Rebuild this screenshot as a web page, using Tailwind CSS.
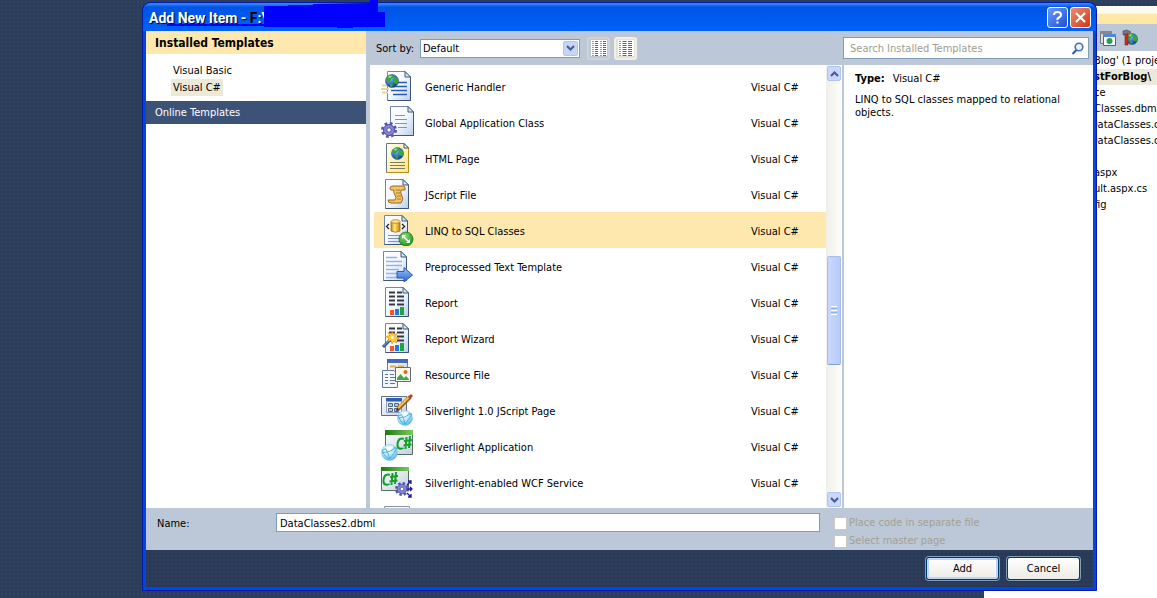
<!DOCTYPE html>
<html lang="en">
<head>
<meta charset="utf-8">
<meta name="viewport" content="width=device-width, initial-scale=1">
<title>Add New Item</title>
<script src="https://cdn.jsdelivr.net/npm/@tailwindcss/browser@4"></script>
</head>
<body class="relative h-screen overflow-hidden bg-[#2c3d5a] bg-[radial-gradient(#314463_1px,transparent_1px)] bg-[size:4px_4px] font-['DejaVu_Sans_Condensed','Noto_Sans',sans-serif] text-[11px] leading-4 text-black">

<svg class="absolute size-0" aria-hidden="true">
  <defs>
    <linearGradient id="paper" x1="0" y1="0" x2="1" y2="1"><stop offset="0" stop-color="#fff"/><stop offset=".5" stop-color="#f4f8fe"/><stop offset="1" stop-color="#b9cdf0"/></linearGradient>
    <linearGradient id="cream" x1="0" y1="0" x2="1" y2="1"><stop offset="0" stop-color="#fffef2"/><stop offset="1" stop-color="#ffe680"/></linearGradient>
    <linearGradient id="win" x1="0" y1="0" x2="1" y2="1"><stop offset="0" stop-color="#fff"/><stop offset="1" stop-color="#c3cfe0"/></linearGradient>
    <linearGradient id="gold" x1="0" y1="0" x2="1" y2="0"><stop offset="0" stop-color="#c98a00"/><stop offset=".4" stop-color="#ffe680"/><stop offset="1" stop-color="#c98200"/></linearGradient>
    <linearGradient id="greenbar" x1="0" y1="0" x2="1" y2="0"><stop offset="0" stop-color="#1f7a12"/><stop offset="1" stop-color="#7cc95e"/></linearGradient>
    <linearGradient id="bluearrow" x1="0" y1="0" x2="0" y2="1"><stop offset="0" stop-color="#9cc3f7"/><stop offset="1" stop-color="#2c67cf"/></linearGradient>
    <radialGradient id="sea" cx=".35" cy=".3" r=".8"><stop offset="0" stop-color="#8fc4ff"/><stop offset=".6" stop-color="#2a62c4"/><stop offset="1" stop-color="#12357c"/></radialGradient>
    <radialGradient id="go" cx=".4" cy=".3" r=".8"><stop offset="0" stop-color="#8be070"/><stop offset="1" stop-color="#118a12"/></radialGradient>
    <radialGradient id="glass" cx=".4" cy=".3" r=".8"><stop offset="0" stop-color="#fff"/><stop offset=".5" stop-color="#b5e4f8"/><stop offset="1" stop-color="#3ba7dc"/></radialGradient>
    <symbol id="page" viewBox="0 0 24 31" overflow="visible">
      <path d="M.5.5H18L23.500 6V29.500H.5Z" fill="url(#paper)" stroke="#7388a8"/><path d="M23.500 6V29.500H.5" fill="none" stroke="#3d5679"/><path d="M18 .5V6H23.500Z" fill="#dfe8f6" stroke="#3d5679"/>
    </symbol>
    <symbol id="globe" viewBox="0 0 14 14" overflow="visible">
      <circle cx="7" cy="7" r="6.500" fill="url(#sea)" stroke="#2a528e" stroke-width=".6"/>
      <path d="M2 3Q5 0 8 1L9 3 6 5 5 8 2 7 1 5ZM9 4L12 3 13.500 7 12 10 9 9 8 6ZM5 9L8 10 7 13 5 12Z" fill="#38a838"/><path d="M3 3Q5 1 7 2L5 4Z" fill="#a7e48c"/>
    </symbol>
    <symbol id="gear" viewBox="0 0 16 16" overflow="visible">
      <circle cx="8" cy="8" r="6.500" fill="none" stroke="#5656b0" stroke-width="3" stroke-dasharray="2.700 2.400"/>
      <circle cx="8" cy="8" r="5.500" fill="#8585d8" stroke="#5050a8"/><circle cx="8" cy="8" r="2.200" fill="#fff" stroke="#5050a8"/>
    </symbol>
    <symbol id="ball" viewBox="0 0 16 16" overflow="visible">
      <circle cx="8" cy="8" r="7.500" fill="url(#glass)" stroke="#83c7e8" stroke-width=".6"/>
      <path d="M1 6Q8 2 15 4Q12 9 8 14Q3 12 1 6ZM1 8Q8 8 13 4M8 14Q7 8 4 4" fill="none" stroke="#4aaedb" stroke-width=".9"/><path d="M4 4Q8 1 12 3L8 6Z" fill="#fff"/>
    </symbol>
    <symbol id="chart" viewBox="0 0 24 31" overflow="visible">
      <use href="#page" width="24" height="31"/>
      <path d="M4 5.500h6m2 0h5M4 9.500h6m2 0h7M4 13.500h6m2 0h7M4 17.500h6m2 0h7" stroke="#333a46" stroke-width="2"/>
      <path d="M5 23h4v5H5z" fill="#f2582a"/><path d="M10 22h4v6h-4z" fill="#2478e0"/><path d="M15 20h4v8h-4z" fill="#22a33a"/>
    </symbol>
    <symbol id="chevdown" viewBox="0 0 9 6"><path d="M1 1L4.500 4.500 8 1" fill="none" stroke="#4d6185" stroke-width="2.200"/></symbol>
  </defs>
</svg>

<!-- Solution Explorer behind the dialog -->
<aside class="absolute bottom-0 right-0 top-[6px] w-[173px] overflow-hidden bg-white">
  <div class="h-[18px] bg-linear-to-b from-[#fffaf0] from-40% to-[#ffe8a6] to-45%"></div>
  <div class="flex h-[27px] items-center gap-1 bg-[#bcc7d8] pl-[115px]">
    <svg class="h-[18px] w-[18px]" viewBox="0 0 18 18"><path d="M1.500 2.500h11v12h-11z" fill="#ddd" stroke="#777"/><path d="M1 2h12v3H1z" fill="#888"/><path d="M4.500 6.500h12v10h-12z" fill="#f4f8ff" stroke="#3b66a8"/><path d="M4 5h13v3H4z" fill="#5187d3"/><circle cx="10.500" cy="12" r="3" fill="#2a9d50"/></svg>
    <svg class="h-[18px] w-[18px]" viewBox="0 0 18 18"><use href="#globe" x="5" y="4" width="12" height="12"/><path d="M2 2L6 1 10 3 8 5 6 4 5 6H2Z" fill="#777" stroke="#444" stroke-width=".6"/><path d="M4 5h3v11H4z" fill="#cc2a22" stroke="#8f1712" stroke-width=".6"/></svg>
  </div>
  <ul class="whitespace-nowrap pl-[110px] pt-[2px]">
    <li class="h-4">Blog' (1 proje</li>
    <li class="h-4 bg-[#ece9d8] font-bold">stForBlog\</li>
    <li class="h-4">ce</li>
    <li class="h-4">Classes.dbml</li>
    <li class="-ml-1 h-4">DataClasses.c</li>
    <li class="-ml-1 h-4">DataClasses.c</li>
    <li class="h-4"></li>
    <li class="h-4">aspx</li>
    <li class="h-4">ult.aspx.cs</li>
    <li class="h-4">fig</li>
  </ul>
</aside>

<!-- Add New Item dialog -->
<main class="absolute bottom-[7px] left-[142px] right-[60px] top-[2px] flex flex-col rounded-t-lg border border-[#0019a8] bg-[#0046e0] px-[3px] pb-[3px]" role="dialog" aria-label="Add New Item">
  <header class="relative -mx-[3px] flex h-7 shrink-0 items-center justify-between rounded-t-lg bg-linear-to-b from-[#3b8dff] via-[#0054e3] via-15% to-[#0061fb] pl-[6px] pr-[5px]">
    <h1 class="relative whitespace-pre pt-[2px] font-['Roboto','Noto_Sans',sans-serif] text-[14px] font-bold leading-5 text-white [text-shadow:1px_1px_1px_#003]">Add New Item - <span class="text-black [text-shadow:none]">F</span>:\</h1>
    <svg class="absolute left-[22px] -top-[3px] h-8 w-[222px]" viewBox="0 0 222 32" aria-hidden="true"><path d="M99 6H123V5H148V4L205 3V0H213V12H220V27H188V28H172V27H99Z" fill="#00f"/><path d="M2 25H100" stroke="#00f" stroke-width="2"/></svg>
    <div class="flex gap-[2px]">
      <button type="button" aria-label="Help" class="flex size-[21px] items-center justify-center rounded-[3px] border border-white bg-linear-to-br from-[#6a99f5] to-[#1d4fd8] text-white"><svg class="size-[17px]" viewBox="0 0 17 17"><path d="M5 6Q5 3 8.500 3T12 6Q12 7.500 10 8.500T8.500 11" fill="none" stroke="#fff" stroke-width="2"/><path d="M7.500 12.500h2v2h-2z" fill="#fff"/></svg></button>
      <button type="button" aria-label="Close" class="flex size-[21px] items-center justify-center rounded-[3px] border border-white bg-linear-to-br from-[#f08b6c] to-[#cc3510]"><svg class="size-[15px]" viewBox="0 0 15 15"><path d="M3 3L12 12M12 3L3 12" stroke="#fff" stroke-width="2.200"/></svg></button>
    </div>
  </header>

  <div class="flex min-h-0 flex-1 bg-[#bcc7d8]">
    <nav class="w-[220px] shrink-0 bg-white">
      <h2 class="h-[23px] bg-[#ffe8ad] pl-[9px] text-[12px] font-bold leading-6">Installed Templates</h2>
      <ul class="flex h-[47px] flex-col items-start pl-[25px] pt-2">
        <li><a href="#" class="block h-[17px] px-[2px] leading-[18px]">Visual Basic</a></li>
        <li><a href="#" class="block h-[17px] bg-[#ece9d8] px-[2px] leading-[18px]">Visual C#</a></li>
      </ul>
      <a href="#" class="block h-[23px] bg-[#3d5277] pl-[9px] leading-6 text-white">Online Templates</a>
    </nav>

    <div class="ml-1 flex min-w-0 flex-1 flex-col">
      <div class="flex h-[34px] shrink-0 items-center pl-[6px] pr-1">
        <label for="sort" class="w-11 pt-px">Sort by:</label>
        <div class="relative">
          <select id="sort" class="block h-[19px] w-40 appearance-none border border-[#7f9db9] bg-white pl-[2px] pt-px leading-4"><option>Default</option></select>
          <span class="pointer-events-none absolute right-[2px] top-[2px] flex h-[15px] w-[15px] items-center justify-center rounded-[2px] border border-[#b0c4f4] bg-[#c5d5fc]"><svg class="h-[6px] w-[9px]"><use href="#chevdown"/></svg></span>
        </div>
        <button type="button" aria-label="Small icons" class="ml-[7px] flex h-[23px] w-[23px] items-center justify-center rounded-[3px] border-2 border-[#cfd3d8] bg-[#bcc7d8]">
          <svg class="h-4 w-4 shrink-0" viewBox="0 0 16 16"><path d="M0 0h16v16H0z" fill="#fff"/><path d="M2 1v15M10 1v15" stroke="#e08a4a" stroke-width="2" stroke-dasharray="1 1"/><path d="M5.500 1v15M13.500 1v15" stroke="#4a5ec0" stroke-width="3" stroke-dasharray="1 1"/></svg>
        </button>
        <button type="button" aria-label="Medium icons" class="ml-1 flex h-[23px] w-[23px] items-center justify-center rounded-[3px] border-2 border-[#f1efe6] bg-[#e4e2d6]">
          <svg class="h-4 w-4 shrink-0" viewBox="0 0 16 16"><path d="M0 0h16v16H0z" fill="#fff"/><path d="M2 1v15" stroke="#e08a4a" stroke-width="2" stroke-dasharray="1 1"/><path d="M6.500 1v15M12 1v15" stroke="#4a5ec0" stroke-width="4" stroke-dasharray="1 1"/></svg>
        </button>
        <div class="ml-auto flex h-[22px] w-[246px] items-center border border-[#7f9db9] bg-white pl-[6px] pr-1">
          <input type="search" aria-label="Search Installed Templates" placeholder="Search Installed Templates" class="min-w-0 flex-1 bg-transparent pt-[2px] outline-none placeholder:text-[#a09c8c]">
          <svg class="size-[13px]" viewBox="0 0 13 13"><circle cx="8" cy="5" r="3.800" fill="#eef5ff" stroke="#3c72c0" stroke-width="1.600"/><path d="M5.500 8L1.500 12" stroke="#2f5fae" stroke-width="2.200"/></svg>
        </div>
      </div>

      <div class="flex min-h-0 flex-1 bg-white">
        <ul class="min-w-0 flex-1 overflow-hidden pl-1 pt-[3px] [&_span]:pt-[3px]">
          <li class="flex h-9 items-center gap-[11px] pl-[6px]"><svg class="h-8 w-[34px] shrink-0" viewBox="0 0 34 32"><use href="#page" x="7" y="1" width="24" height="31"/><path d="M18 12.500h9M13 16.500h14M11 20.500h16M13 24.500h14" stroke="#2b5cab" stroke-width="1.300"/><path d="M2 15.500h7M1 19h8M2 22.500h6" stroke="#e0d79a" stroke-width="2"/><use href="#globe" x="5" y="4" width="14" height="14"/></svg><span class="flex-1">Generic Handler</span><span class="w-[75px]">Visual C#</span></li>
          <li class="flex h-9 items-center gap-[11px] pl-[6px]"><svg class="h-8 w-[34px] shrink-0" viewBox="0 0 34 32"><use href="#page" x="10" y="0" width="24" height="31"/><path d="M15 9.500h10M15 13.500h12M15 17.500h12M18 21.500h9" stroke="#8693a8"/><use href="#gear" x="1" y="16" width="16" height="16"/></svg><span class="flex-1">Global Application Class</span><span class="w-[75px]">Visual C#</span></li>
          <li class="flex h-9 items-center gap-[11px] pl-[6px]"><svg class="h-8 w-[34px] shrink-0" viewBox="0 0 34 32"><path d="M6.500 1.500H24L28.500 6V30.500H6.500Z" fill="url(#cream)" stroke="#67758c"/><path d="M28.500 6V30.500H6.500" fill="none" stroke="#b98c1e"/><path d="M24 1.500V6H28.500Z" fill="#fff" stroke="#3a4c66"/><path d="M10 20.500h15M10 23.500h15M10 26.500h15" stroke="#7d7b58"/><use href="#globe" x="11" y="5" width="13" height="13"/></svg><span class="flex-1">HTML Page</span><span class="w-[75px]">Visual C#</span></li>
          <li class="flex h-9 items-center gap-[11px] pl-[6px]"><svg class="h-8 w-[34px] shrink-0" viewBox="0 0 34 32"><use href="#page" x="5" y="1" width="24" height="31"/><path d="M10 10Q10 8 13 8H23Q25 8 25 10V12H21Q20 15 22 18T21 25H11Q8 25 8 22H15Q17 20 15 17T14 12H11Q10 12 10 10Z" fill="#f1c467" stroke="#9d6716"/><path d="M16 12h4M16 15h4M17 18h4M17 21h4" stroke="#a8772c"/></svg><span class="flex-1">JScript File</span><span class="w-[75px]">Visual C#</span></li>
          <li class="flex h-9 items-center gap-[11px] bg-[#ffe8ad] pl-[6px]" aria-current="true"><svg class="h-8 w-[34px] shrink-0" viewBox="0 0 34 32"><use href="#page" x="4" y="1" width="24" height="31"/><path d="M11 7.500V17Q15.500 19.500 20 17V7.500Z" fill="url(#gold)" stroke="#a96c00" stroke-width=".8"/><ellipse cx="15.500" cy="7.500" rx="4.500" ry="1.800" fill="#ffe88a" stroke="#b67b08" stroke-width=".8"/><path d="M9 10L6.500 12.500 9 15M22 10l2.500 2.500L22 15" fill="none" stroke="#222" stroke-width="1.300"/><path d="M8 21.500h12M8 24.500h12M8 27.500h12" stroke="#8793a7"/><circle cx="26" cy="25" r="7" fill="url(#go)" stroke="#16761a" stroke-width=".8"/><path d="M22 21h4l-4 4ZM30 29h-4l4-4Z" fill="#fff"/><path d="M23 22L29 28" stroke="#fff" stroke-width="1.500"/></svg><span class="flex-1">LINQ to SQL Classes</span><span class="w-[75px]">Visual C#</span></li>
          <li class="flex h-9 items-center gap-[11px] pl-[6px]"><svg class="h-8 w-[34px] shrink-0" viewBox="0 0 34 32"><use href="#page" x="3" y="1" width="24" height="31"/><path d="M6 7.500h11M6 11.500h16M6 15.500h16M6 19.500h13M6 23.500h12M6 27.500h12" stroke="#8fb5ea" stroke-width="1.300"/><path d="M17 21.500h7v-4l8.500 7.500-8.500 7v-4h-7Z" fill="url(#bluearrow)" stroke="#275bb5"/></svg><span class="flex-1">Preprocessed Text Template</span><span class="w-[75px]">Visual C#</span></li>
          <li class="flex h-9 items-center gap-[11px] pl-[6px]"><svg class="h-8 w-[34px] shrink-0" viewBox="0 0 34 32"><use href="#chart" x="5" y="1" width="24" height="31"/></svg><span class="flex-1">Report</span><span class="w-[75px]">Visual C#</span></li>
          <li class="flex h-9 items-center gap-[11px] pl-[6px]"><svg class="h-8 w-[34px] shrink-0" viewBox="0 0 34 32"><use href="#chart" x="5" y="1" width="24" height="31"/><path d="M3 25L11 17" stroke="#264f9c" stroke-width="3"/><path d="M3.500 24L10 17.500" stroke="#8fb7f4"/><path d="M12 9.500l1.500 3.500 3.500-1.500-1.500 3.500 3.500 1.500-3.500 1 1.500 3.500-3.500-1.500-1.500 2.500-1-3.500-3.500 1 1.500-3-3.500-2 4-.5-1.500-3.500 3.500 1.500Z" fill="#ffcc3d" stroke="#d99115" stroke-width=".6"/><circle cx="12.500" cy="15.500" r="1.500" fill="#fff7c9"/></svg><span class="flex-1">Report Wizard</span><span class="w-[75px]">Visual C#</span></li>
          <li class="flex h-9 items-center gap-[11px] pl-[6px]"><svg class="h-8 w-[34px] shrink-0" viewBox="0 0 34 32"><path d="M7.500 1.500h20v19h-20z" fill="url(#win)" stroke="#6c7f9e"/><path d="M7 1h21v4H7z" fill="#3f6ac0"/><path d="M10 8.500h6m2 0h6" stroke="#e7ae3c" stroke-width="2"/><path d="M2.500 12.500H14L17.500 16V29.500H2.500Z" fill="#f2f6fd" stroke="#60789c"/><path d="M5 16.500h3m2 0h4M5 19.500h3m2 0h5M5 22.500h3m2 0h5M5 25.500h3m2 0h5" stroke="#60789c"/><path d="M15.500 9.500h15v14h-15z" fill="#fff7ea" stroke="#5f6c80"/><path d="M17 22V20L20.500 16 24 20 26 18 29 21V22Z" fill="#44a653"/><circle cx="25.500" cy="14" r="2" fill="#e9632b"/></svg><span class="flex-1">Resource File</span><span class="w-[75px]">Visual C#</span></li>
          <li class="flex h-9 items-center gap-[11px] pl-[6px]"><svg class="h-8 w-[34px] shrink-0" viewBox="0 0 34 32"><path d="M1.500 2.500h25v19h-25z" fill="url(#win)" stroke="#5f6f88"/><path d="M6 4h16v3H6z" fill="#2d5eb8"/><path d="M6.500 7.500h15v11h-15z" fill="#eef3fb" stroke="#8ba0c0"/><path d="M8.500 9.500h4v3h-4zM14.500 9.500h4v3h-4zM8.500 14.500h4v3h-4zM14.500 14.500h4v3h-4z" fill="#b9c5d6" stroke="#536782"/><path d="M18 15L30 3" stroke="#9d6018" stroke-width="4"/><path d="M18 14L29 3" stroke="#f5bc5a" stroke-width="2"/><path d="M28 3l3-3 2 2-3 3Z" fill="#bf3434"/><path d="M16 17l1-3 2 2Z" fill="#222"/><use href="#ball" x="17" y="16" width="16" height="16"/></svg><span class="flex-1">Silverlight 1.0 JScript Page</span><span class="w-[75px]">Visual C#</span></li>
          <li class="flex h-9 items-center gap-[11px] pl-[6px]"><svg class="h-8 w-[34px] shrink-0" viewBox="0 0 34 32"><path d="M5.500.5h27v24h-27z" fill="url(#win)" stroke="#55705c"/><path d="M5 0h28v5H5z" fill="url(#greenbar)"/><path d="M24 9Q22 8 20 9T17.500 14 19.500 18.500 23.500 18M26.500 7l-1 12M30 6l-1 12M24 11l8-1M23.500 15.500l8-1" fill="none" stroke="#16a02b" stroke-width="2"/><use href="#ball" x="1" y="14" width="17" height="17"/></svg><span class="flex-1">Silverlight Application</span><span class="w-[75px]">Visual C#</span></li>
          <li class="flex h-9 items-center gap-[11px] pl-[6px]"><svg class="h-8 w-[34px] shrink-0" viewBox="0 0 34 32"><path d="M1.500 1.500h27v23h-27z" fill="url(#win)" stroke="#55705c"/><path d="M1 1h28v4H1z" fill="url(#greenbar)"/><path d="M10 9Q8 8 6 9T3.500 14 5.500 18.500 9.500 18M12.500 7l-1 12M16 6l-1 12M10 11l8-1M9.500 15.500l8-1" fill="none" stroke="#16a02b" stroke-width="2"/><use href="#gear" x="15" y="16" width="14" height="14"/><path d="M27 19l4-4m-3 0h3v3M27 23h5m-2-2l2 2-2 2M27 27l4 4m-3 0h3v-3" fill="none" stroke="#1b1b9e" stroke-width="1.300"/></svg><span class="flex-1">Silverlight-enabled WCF Service</span><span class="w-[75px]">Visual C#</span></li>
          <li class="flex h-9 items-center pl-[6px]"><svg class="h-6 w-[34px] shrink-0" viewBox="0 0 34 24"><path d="M4.500 .5h25v23h-25z" fill="#fff" stroke="#8b95a5"/></svg></li>
        </ul>

        <div class="flex w-[17px] shrink-0 flex-col border-r border-[#bcc7d8] bg-linear-to-r from-[#f0efe8] to-[#fefefc] px-px py-px" aria-hidden="true">
          <div class="flex h-[15px] items-center justify-center rounded-[2px] border border-[#b0c4f4] bg-[#c9d8fc]"><svg class="h-[6px] w-[9px] rotate-180"><use href="#chevdown"/></svg></div>
          <div class="flex-[177]"></div>
          <div class="flex flex-[108] flex-col items-center justify-center gap-px rounded-[2px] border border-[#a5bdf0] border-b-[#7b9fd8] bg-linear-to-r from-[#c9d8fc] to-[#b8cbf8]"><i class="h-px w-[6px] bg-white"></i><i class="h-px w-[6px] bg-[#8cb0f8]"></i><i class="h-px w-[6px] bg-white"></i><i class="h-px w-[6px] bg-[#8cb0f8]"></i><i class="h-px w-[6px] bg-white"></i></div>
          <div class="flex-[129]"></div>
          <div class="flex h-[15px] items-center justify-center rounded-[2px] border border-[#b0c4f4] bg-[#c9d8fc]"><svg class="h-[6px] w-[9px]"><use href="#chevdown"/></svg></div>
        </div>

        <section class="w-[250px] shrink-0 border-l border-[#bcc7d8] py-[6px] pl-[11px] pr-6">
          <p><b class="mr-2">Type:</b>Visual C#</p>
          <p class="mt-[6px] leading-[13px]">LINQ to SQL classes mapped to relational objects.</p>
        </section>
      </div>
    </div>
  </div>

  <form class="flex h-[42px] shrink-0 bg-[#bcc7d8] pl-[11px] pt-[5px]">
    <label for="name" class="w-[119px] pt-[3px]">Name:</label>
    <input id="name" type="text" value="DataClasses2.dbml" class="h-[19px] min-w-0 flex-1 border border-[#7f9db9] bg-white px-[3px] pt-px">
    <div class="ml-[14px] w-[259px] pt-px text-[#a5a192]">
      <label class="flex h-[18px] items-center gap-[2px]"><input type="checkbox" disabled class="size-[13px] appearance-none border border-[#cac8bb] bg-white">Place code in separate file</label>
      <label class="flex h-[18px] items-center gap-[2px]"><input type="checkbox" disabled class="size-[13px] appearance-none border border-[#cac8bb] bg-white">Select master page</label>
    </div>
  </form>

  <footer class="flex h-[37px] shrink-0 items-center justify-end gap-2 bg-[#293955] bg-[radial-gradient(#2e405f_1px,transparent_1px)] bg-[size:4px_4px] pr-[13px]">
    <button type="button" class="h-[23px] w-[73px] rounded-[3px] border border-[#003c74] bg-linear-to-b from-white to-[#ecebe6] pt-px ring-1 ring-[#7f9db9] shadow-[inset_0_0_0_2px_#bcd4f6]">Add</button>
    <button type="button" class="h-[23px] w-[73px] rounded-[3px] border border-[#003c74] bg-linear-to-b from-white to-[#ecebe6] pt-px ring-1 ring-[#7f9db9]">Cancel</button>
  </footer>
</main>
</body>
</html>
